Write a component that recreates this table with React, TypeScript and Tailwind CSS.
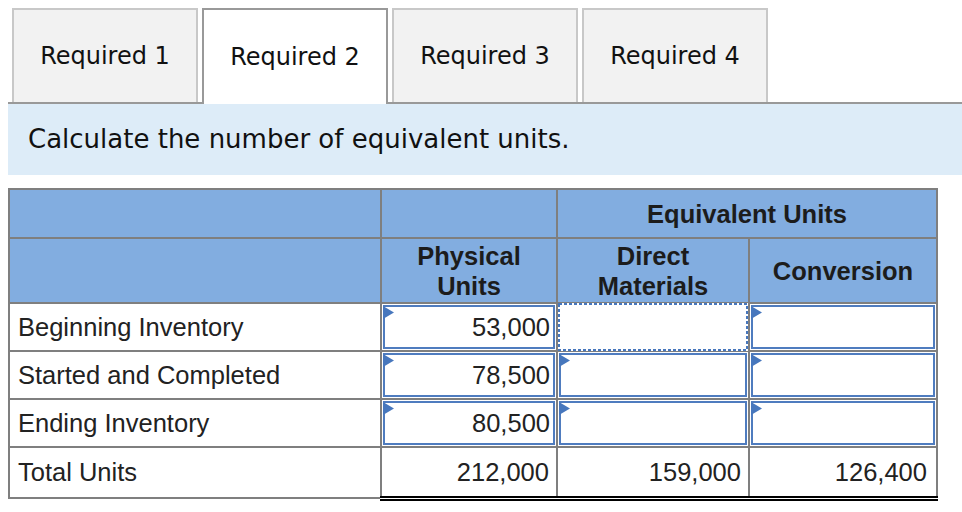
import React from "react";

function Tri() {
  return (
    <svg className="absolute -left-[2px] -top-[1px]" width="11" height="13" viewBox="0 0 11 13">
      <polygon points="0,0 11,6.5 0,13" fill="#4777bd" />
    </svg>
  );
}

function InputBox({ value }: { value?: string }) {
  return (
    <div className="relative h-[44px] mx-[1px] border-2 border-[#4f7cbf] bg-white flex items-center justify-end pr-[3px]">
      <Tri />
      <span>{value ?? ""}</span>
    </div>
  );
}

function FocusBox() {
  return (
    <div className="relative h-[48px] -my-[1px] bg-white">
      <svg className="absolute inset-0" width="100%" height="100%">
        <rect x="1" y="1" width="calc(100% - 2px)" height="46" fill="none" stroke="#4777bd" strokeWidth="2" strokeDasharray="3 2" style={{ width: "calc(100% - 2px)" }} />
      </svg>
    </div>
  );
}

const tabs = ["Required 1", "Required 2", "Required 3", "Required 4"];

export default function App() {
  const cell = "border-2 border-[#7f7f7f]";
  const totalCell =
    "border-2 border-[#7f7f7f] border-t-black border-b-[5px] border-b-black border-double text-right";
  const solidSides = { borderTopStyle: "solid", borderLeftStyle: "solid", borderRightStyle: "solid" } as const;
  return (
    <div className="w-[962px] h-[512px] bg-white overflow-hidden pt-[8px] pl-[8px]">
      <div className="flex pl-[4px] gap-[4px] h-[94px] items-stretch" style={{ fontFamily: '"DejaVu Sans", Verdana, sans-serif' }}>
        {tabs.map((t, i) =>
          i === 1 ? (
            <div key={t} className="relative z-10 w-[186px] h-[96px] border-2 border-b-0 border-[#999999] bg-white flex items-center justify-center text-[24px] text-[#111]">
              {t}
            </div>
          ) : (
            <div key={t} className="w-[186px] h-[94px] border-2 border-b-0 border-[#c8c8c8] bg-[#f2f2f2] flex items-center justify-center text-[24px] text-[#111]">
              {t}
            </div>
          )
        )}
      </div>
      <div
        className="h-[73px] border-t-2 border-[#999999] bg-[#ddecf8] flex items-center pl-[20px] text-[26px] text-[#111]"
        style={{ fontFamily: '"DejaVu Sans", Verdana, sans-serif' }}
      >
        Calculate the number of equivalent units.
      </div>
      <div className="h-[13px]" />
      <table
        className="table-fixed border-collapse w-[928px] text-[25.5px] text-[#222]"
        style={{ fontFamily: '"Liberation Sans", Arial, sans-serif' }}
      >
        <colgroup>
          <col className="w-[372px]" />
          <col className="w-[176px]" />
          <col className="w-[192px]" />
          <col className="w-[188px]" />
        </colgroup>
        <thead className="bg-[#82ade0] font-bold text-[#1c1c1c] leading-[30px]">
          <tr className="h-[49px]">
            <th className={cell}></th>
            <th className={cell}></th>
            <th className={cell} colSpan={2}>Equivalent Units</th>
          </tr>
          <tr className="h-[65px]">
            <th className={cell}></th>
            <th className={cell}>
              Physical
              <br />
              Units
            </th>
            <th className={cell}>
              Direct
              <br />
              Materials
            </th>
            <th className={cell}>Conversion</th>
          </tr>
        </thead>
        <tbody>
          <tr className="h-[48px]">
            <td className={`${cell} pl-[8px]`}>Beginning Inventory</td>
            <td className={`${cell} p-0`}><InputBox value="53,000" /></td>
            <td className={`${cell} p-0`}><FocusBox /></td>
            <td className={`${cell} p-0`}><InputBox /></td>
          </tr>
          <tr className="h-[48px]">
            <td className={`${cell} pl-[8px]`}>Started and Completed</td>
            <td className={`${cell} p-0`}><InputBox value="78,500" /></td>
            <td className={`${cell} p-0`}><InputBox /></td>
            <td className={`${cell} p-0`}><InputBox /></td>
          </tr>
          <tr className="h-[48px]">
            <td className={`${cell} pl-[8px]`}>Ending Inventory</td>
            <td className={`${cell} p-0`}><InputBox value="80,500" /></td>
            <td className={`${cell} p-0`}><InputBox /></td>
            <td className={`${cell} p-0`}><InputBox /></td>
          </tr>
          <tr className="h-[51px]">
            <td className={`${cell} pl-[8px]`}>Total Units</td>
            <td className={`${totalCell} pr-[7px]`} style={solidSides}>212,000</td>
            <td className={`${totalCell} pr-[7px]`} style={solidSides}>159,000</td>
            <td className={`${totalCell} pr-[9px]`} style={solidSides}>126,400</td>
          </tr>
        </tbody>
      </table>
    </div>
  );
}
